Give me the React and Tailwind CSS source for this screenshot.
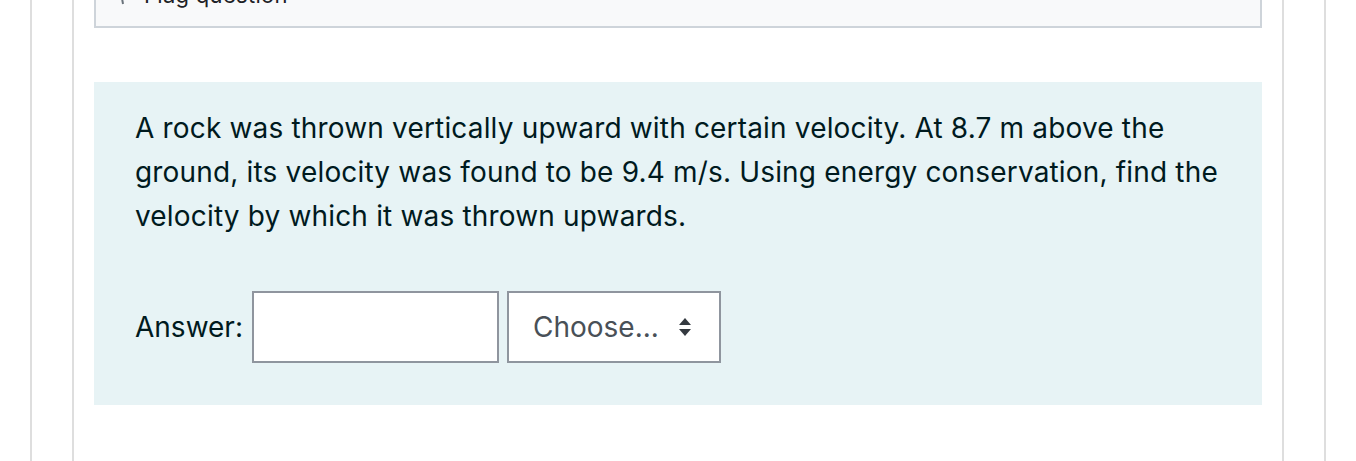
export default function App() {
  return (
    <div className="h-[461px] w-full overflow-hidden bg-white pl-[30px] font-['Inter',sans-serif]">
      <div className="flex h-full w-[1296px] flex-col border-x-2 border-[#dedede] px-[40px]">
        <div className="flex h-full flex-col border-x-2 border-[#dedede] px-[20px]">
          {/* question info box, mostly scrolled out of view */}
          <div className="-mt-[40px] flex h-[68px] shrink-0 items-end border-2 border-[#ced4da] bg-[#f8f9fa] pb-[17px] pl-[22px] text-[22px] leading-[28px] tracking-[0.3px] text-[#1d2125]">
            <svg width="6" height="26" viewBox="0 0 6 26" className="mr-[20px] mb-[4px]">
              <path d="M1 2 L5 25" stroke="#6a737b" strokeWidth="2" fill="none" />
            </svg>
            <span>Flag question</span>
          </div>

          {/* formulation */}
          <div className="mt-[54px] shrink-0 bg-[#e7f3f5] px-[41px] pt-[24px] pb-[42px] text-[#001a1e]">
            <p className="text-[28px] leading-[44px] tracking-[0.17px]">
              A rock was thrown vertically upward with certain velocity. At 8.7 m above the
              ground, its velocity was found to be 9.4 m/s. Using energy conservation, find the
              velocity by which it was thrown upwards.
            </p>

            <div className="mt-[53px] flex items-center">
              <span className="text-[28px] leading-[36px]">Answer:</span>
              <div className="ml-[9px] h-[72px] w-[247px] border-2 border-[#8f959e] bg-white" />
              <div className="ml-[8px] flex h-[72px] w-[214px] items-center border-2 border-[#8f959e] bg-white pl-[24px] text-[28px] text-[#495057]">
                <span>Choose...</span>
                <svg width="14" height="20" viewBox="0 0 14 20" className="ml-[19px]">
                  <path d="M7 1 L13 8 L1 8 Z" fill="#343a40" />
                  <path d="M7 19 L13 12 L1 12 Z" fill="#343a40" />
                </svg>
              </div>
            </div>
          </div>
        </div>
      </div>
    </div>
  );
}
